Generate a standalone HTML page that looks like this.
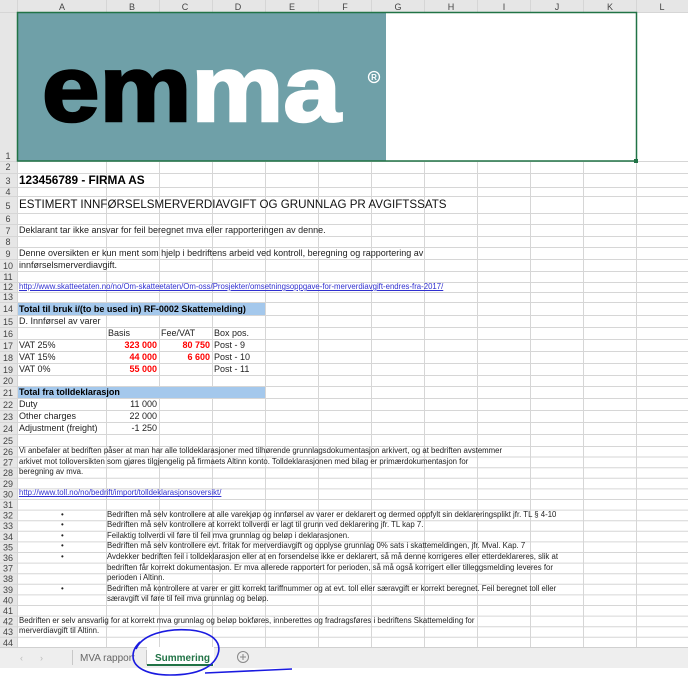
<!DOCTYPE html>
<html><head><meta charset="utf-8">
<style>
*{margin:0;padding:0;box-sizing:border-box}
body{width:688px;height:676px;overflow:hidden;background:#fff;font-family:"Liberation Sans",Arial,sans-serif;position:relative;color:#222}
.t{position:absolute;white-space:nowrap;font-size:9px;line-height:12px}
.s{font-size:7.8px;line-height:10.6px}
.red{color:#f00;font-weight:bold;text-align:right}
.lnk{color:#3030d0;text-decoration:underline;font-size:7.8px}
.hl{position:absolute;background:#a4c8ec}
</style></head><body>
<svg width="688" height="676" style="position:absolute;left:0;top:0">
<rect x="0" y="0" width="688" height="12" fill="#e6e6e6"/>
<rect x="0" y="0" width="17" height="647" fill="#e6e6e6"/>
<g stroke="#d6d6d6" stroke-width="1">
<line x1="17.5" y1="0" x2="17.5" y2="647"/><line x1="106.5" y1="0" x2="106.5" y2="647"/><line x1="159.5" y1="0" x2="159.5" y2="647"/><line x1="212.5" y1="0" x2="212.5" y2="647"/><line x1="265.5" y1="0" x2="265.5" y2="647"/><line x1="318.5" y1="0" x2="318.5" y2="647"/><line x1="371.5" y1="0" x2="371.5" y2="647"/><line x1="424.5" y1="0" x2="424.5" y2="647"/><line x1="477.5" y1="0" x2="477.5" y2="647"/><line x1="530.5" y1="0" x2="530.5" y2="647"/><line x1="583.5" y1="0" x2="583.5" y2="647"/><line x1="636.5" y1="0" x2="636.5" y2="647"/>
<line x1="0" y1="12.5" x2="688" y2="12.5"/><line x1="0" y1="161.5" x2="688" y2="161.5"/><line x1="0" y1="173.5" x2="688" y2="173.5"/><line x1="0" y1="187.5" x2="688" y2="187.5"/><line x1="0" y1="196.5" x2="688" y2="196.5"/><line x1="0" y1="213.5" x2="688" y2="213.5"/><line x1="0" y1="224.5" x2="688" y2="224.5"/><line x1="0" y1="236.5" x2="688" y2="236.5"/><line x1="0" y1="247.5" x2="688" y2="247.5"/><line x1="0" y1="259.5" x2="688" y2="259.5"/><line x1="0" y1="271.5" x2="688" y2="271.5"/><line x1="0" y1="282.5" x2="688" y2="282.5"/><line x1="0" y1="292.5" x2="688" y2="292.5"/><line x1="0" y1="302.5" x2="688" y2="302.5"/><line x1="0" y1="315.5" x2="688" y2="315.5"/><line x1="0" y1="327.5" x2="688" y2="327.5"/><line x1="0" y1="339.5" x2="688" y2="339.5"/><line x1="0" y1="351.5" x2="688" y2="351.5"/><line x1="0" y1="363.5" x2="688" y2="363.5"/><line x1="0" y1="375.5" x2="688" y2="375.5"/><line x1="0" y1="386.5" x2="688" y2="386.5"/><line x1="0" y1="398.5" x2="688" y2="398.5"/><line x1="0" y1="410.5" x2="688" y2="410.5"/><line x1="0" y1="422.5" x2="688" y2="422.5"/><line x1="0" y1="434.5" x2="688" y2="434.5"/><line x1="0" y1="446.5" x2="688" y2="446.5"/><line x1="0" y1="457" x2="688" y2="457"/><line x1="0" y1="467.7" x2="688" y2="467.7"/><line x1="0" y1="478.3" x2="688" y2="478.3"/><line x1="0" y1="488.9" x2="688" y2="488.9"/><line x1="0" y1="499.5" x2="688" y2="499.5"/><line x1="0" y1="510.1" x2="688" y2="510.1"/><line x1="0" y1="520.7" x2="688" y2="520.7"/><line x1="0" y1="531.3" x2="688" y2="531.3"/><line x1="0" y1="541.9" x2="688" y2="541.9"/><line x1="0" y1="552.5" x2="688" y2="552.5"/><line x1="0" y1="563.1" x2="688" y2="563.1"/><line x1="0" y1="573.7" x2="688" y2="573.7"/><line x1="0" y1="584.3" x2="688" y2="584.3"/><line x1="0" y1="594.9" x2="688" y2="594.9"/><line x1="0" y1="605.5" x2="688" y2="605.5"/><line x1="0" y1="616.1" x2="688" y2="616.1"/><line x1="0" y1="626.7" x2="688" y2="626.7"/><line x1="0" y1="637.3" x2="688" y2="637.3"/>
</g>
<g font-family="Liberation Sans, Arial, sans-serif" font-size="9" fill="#444" text-anchor="middle">
<text x="62" y="10">A</text><text x="132" y="10">B</text><text x="185" y="10">C</text><text x="238" y="10">D</text><text x="292" y="10">E</text><text x="345" y="10">F</text><text x="398" y="10">G</text><text x="451" y="10">H</text><text x="504" y="10">I</text><text x="557" y="10">J</text><text x="610" y="10">K</text><text x="662" y="10">L</text>
</g>
<g font-family="Liberation Sans, Arial, sans-serif" font-size="9" fill="#444" text-anchor="middle">
<text x="8" y="159">1</text><text x="8" y="170">2</text><text x="8" y="184">3</text><text x="8" y="195">4</text><text x="8" y="209">5</text><text x="8" y="222">6</text><text x="8" y="234">7</text><text x="8" y="245">8</text><text x="8" y="257">9</text><text x="8" y="269">10</text><text x="8" y="280">11</text><text x="8" y="290">12</text><text x="8" y="300">13</text><text x="8" y="312">14</text><text x="8" y="325">15</text><text x="8" y="337">16</text><text x="8" y="349">17</text><text x="8" y="361">18</text><text x="8" y="373">19</text><text x="8" y="384">20</text><text x="8" y="396">21</text><text x="8" y="408">22</text><text x="8" y="420">23</text><text x="8" y="432">24</text><text x="8" y="444">25</text>
<text x="8" y="455">26</text><text x="8" y="465.6">27</text><text x="8" y="476.2">28</text><text x="8" y="486.8">29</text><text x="8" y="497.4">30</text><text x="8" y="508">31</text><text x="8" y="518.6">32</text><text x="8" y="529.2">33</text><text x="8" y="539.8">34</text><text x="8" y="550.4">35</text><text x="8" y="561">36</text><text x="8" y="571.6">37</text><text x="8" y="582.2">38</text><text x="8" y="592.8">39</text><text x="8" y="603.4">40</text><text x="8" y="614">41</text><text x="8" y="624.6">42</text><text x="8" y="635.2">43</text><text x="8" y="645.8">44</text>
</g>
<rect x="18" y="13" width="618" height="148" fill="#fff"/>
<rect x="18" y="13" width="368" height="148" fill="#6fa0a8"/>
<g transform="translate(42,121) scale(1.1,1)">
<text x="0" y="0" font-family="Liberation Sans, Arial, sans-serif" font-weight="bold" font-size="94" stroke-width="2.5" fill="#000" stroke="#000">em<tspan fill="#fff" stroke="#fff">ma</tspan></text>
</g>
<circle cx="374" cy="77" r="5.5" fill="none" stroke="#fff" stroke-width="1.3"/>
<text x="374" y="80" font-family="Liberation Sans, Arial, sans-serif" font-size="8" font-weight="bold" fill="#fff" text-anchor="middle">R</text>
<rect x="17.5" y="12.5" width="619" height="148.5" fill="none" stroke="#217346" stroke-width="1.5"/>
<rect x="634" y="159" width="4" height="4" fill="#217346"/>
<rect x="0" y="647" width="688" height="21" fill="#eeeeee"/>
<line x1="0" y1="647.5" x2="688" y2="647.5" stroke="#d0d0d0"/>
<text x="20" y="661" font-family="Liberation Sans, Arial, sans-serif" font-size="9" fill="#bbb">‹</text>
<text x="40" y="661" font-family="Liberation Sans, Arial, sans-serif" font-size="9" fill="#bbb">›</text>
<line x1="72.5" y1="650" x2="72.5" y2="665" stroke="#c8c8c8"/>
<line x1="146.5" y1="650" x2="146.5" y2="665" stroke="#c8c8c8"/>
<text x="80" y="661" font-family="Liberation Sans, Arial, sans-serif" font-size="10" fill="#666">MVA rapport</text>
<rect x="147" y="647" width="67" height="19" fill="#fff"/>
<line x1="147" y1="665" x2="213" y2="665" stroke="#217346" stroke-width="2"/>
<text x="155" y="661" font-family="Liberation Sans, Arial, sans-serif" font-size="10" font-weight="bold" fill="#217346">Summering</text>
<circle cx="243" cy="657" r="5.5" fill="none" stroke="#888" stroke-width="1"/>
<path d="M240 657h6M243 654v6" stroke="#888" stroke-width="1"/>
<path d="M136 649 C142 635,165 628,190 630 C212 632,222 642,218 654 C214 666,200 675,170 675 C148 675,133 668,133 656 C133 650,136 646,140 642 M205 673 L292 669" fill="none" stroke="#1a1ae0" stroke-width="1.6"/>
</svg>

<div class="t" style="left:19px;top:173px;line-height:14px;font-size:11.8px;font-weight:bold;color:#000">123456789 - FIRMA AS</div>
<div class="t" style="left:19px;top:196px;line-height:17px;font-size:11.6px;color:#111">ESTIMERT INNFØRSELSMERVERDIAVGIFT OG GRUNNLAG PR AVGIFTSSATS</div>
<div class="t" style="left:19px;top:224px">Deklarant tar ikke ansvar for feil beregnet mva eller rapporteringen av denne.</div>
<div class="t" style="left:19px;top:247px">Denne oversikten er kun ment som hjelp i bedriftens arbeid ved kontroll, beregning og rapportering av</div>
<div class="t" style="left:19px;top:259px">innførselsmerverdiavgift.</div>
<div class="t lnk" style="left:19px;top:282px;line-height:10px">http://www.skatteetaten.no/no/Om-skatteetaten/Om-oss/Prosjekter/omsetningsoppgave-for-merverdiavgift-endres-fra-2017/</div>

<div class="hl" style="left:18px;top:303px;width:247px;height:12px"></div>
<div class="t" style="left:19px;top:303px;font-weight:bold;color:#000">Total til bruk i/(to be used in) RF-0002 Skattemelding)</div>
<div class="t" style="left:19px;top:315px">D. Innførsel av varer</div>
<div class="t" style="left:108px;top:327px">Basis</div>
<div class="t" style="left:161px;top:327px">Fee/VAT</div>
<div class="t" style="left:214px;top:327px">Box pos.</div>
<div class="t" style="left:19px;top:339px">VAT 25%</div>
<div class="t" style="left:19px;top:351px">VAT 15%</div>
<div class="t" style="left:19px;top:363px">VAT 0%</div>
<div class="t red" style="left:106px;width:51px;top:339px">323 000</div>
<div class="t red" style="left:106px;width:51px;top:351px">44 000</div>
<div class="t red" style="left:106px;width:51px;top:363px">55 000</div>
<div class="t red" style="left:159px;width:51px;top:339px">80 750</div>
<div class="t red" style="left:159px;width:51px;top:351px">6 600</div>
<div class="t" style="left:214px;top:339px">Post - 9</div>
<div class="t" style="left:214px;top:351px">Post - 10</div>
<div class="t" style="left:214px;top:363px">Post - 11</div>
<div class="hl" style="left:18px;top:387px;width:247px;height:11px"></div>
<div class="t" style="left:19px;top:386px;font-weight:bold;color:#000">Total fra tolldeklarasjon</div>
<div class="t" style="left:19px;top:398px">Duty</div>
<div class="t" style="left:19px;top:410px">Other charges</div>
<div class="t" style="left:19px;top:422px">Adjustment (freight)</div>
<div class="t" style="left:106px;width:51px;top:398px;text-align:right">11 000</div>
<div class="t" style="left:106px;width:51px;top:410px;text-align:right">22 000</div>
<div class="t" style="left:106px;width:51px;top:422px;text-align:right">-1 250</div>

<div class="t s" style="left:19px;top:446px">Vi anbefaler at bedriften påser at man har alle tolldeklarasjoner med tilhørende grunnlagsdokumentasjon arkivert, og at bedriften avstemmer</div>
<div class="t s" style="left:19px;top:456.6px">arkivet mot tolloversikten som gjøres tilgjengelig på firmaets Altinn konto. Tolldeklarasjonen med bilag er primærdokumentasjon for</div>
<div class="t s" style="left:19px;top:467.2px">beregning av mva.</div>
<div class="t s lnk" style="left:19px;top:488.4px">http://www.toll.no/no/bedrift/import/tolldeklarasjonsoversikt/</div>

<div class="t s" style="left:61px;top:509.6px">•</div>
<div class="t s" style="left:107px;top:509.6px">Bedriften må selv kontrollere at alle varekjøp og innførsel av varer er deklarert og dermed oppfylt sin deklareringsplikt jfr. TL § 4-10</div>
<div class="t s" style="left:61px;top:520.2px">•</div>
<div class="t s" style="left:107px;top:520.2px">Bedriften må selv kontrollere at korrekt tollverdi er lagt til grunn ved deklarering jfr. TL kap 7.</div>
<div class="t s" style="left:61px;top:530.8px">•</div>
<div class="t s" style="left:107px;top:530.8px">Feilaktig tollverdi vil føre til feil mva grunnlag og beløp i deklarasjonen.</div>
<div class="t s" style="left:61px;top:541.4px">•</div>
<div class="t s" style="left:107px;top:541.4px">Bedriften må selv kontrollere evt. fritak for merverdiavgift og opplyse grunnlag 0% sats i skattemeldingen, jfr. Mval. Kap. 7</div>
<div class="t s" style="left:61px;top:552px">•</div>
<div class="t s" style="left:107px;top:552px">Avdekker bedriften feil i tolldeklarasjon eller at en forsendelse ikke er deklarert, så må denne korrigeres eller etterdeklareres, slik at</div>
<div class="t s" style="left:107px;top:562.6px">bedriften får korrekt dokumentasjon. Er mva allerede rapportert for perioden, så må også korrigert eller tilleggsmelding leveres for</div>
<div class="t s" style="left:107px;top:573.2px">perioden i Altinn.</div>
<div class="t s" style="left:61px;top:583.8px">•</div>
<div class="t s" style="left:107px;top:583.8px">Bedriften må kontrollere at varer er gitt korrekt tariffnummer og at evt. toll eller særavgift er korrekt beregnet. Feil beregnet toll eller</div>
<div class="t s" style="left:107px;top:594.4px">særavgift vil føre til feil mva grunnlag og beløp.</div>
<div class="t s" style="left:19px;top:615.6px">Bedriften er selv ansvarlig for at korrekt mva grunnlag og beløp bokføres, innberettes og fradragsføres i bedriftens Skattemelding for</div>
<div class="t s" style="left:19px;top:626.2px">merverdiavgift til Altinn.</div>
</body></html>
